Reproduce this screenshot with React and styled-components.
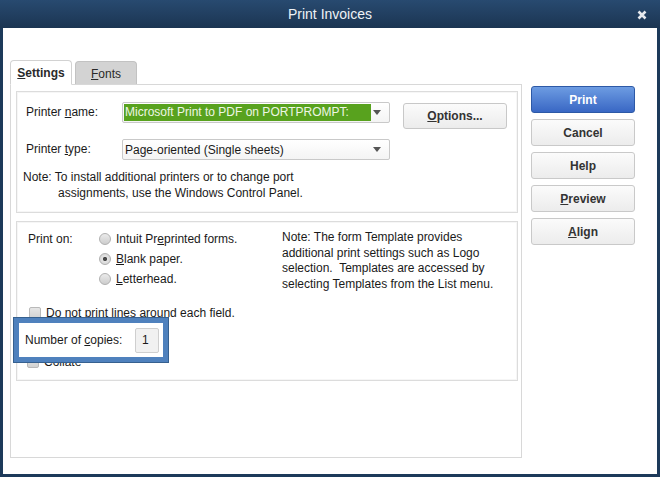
import styled, { createGlobalStyle } from "styled-components";

const GlobalStyle = createGlobalStyle`
    html, body {
        margin: 0;
        padding: 0;
        background: #ffffff;
    }
    * {
        box-sizing: border-box;
    }
`

export default function App() {
    return (
        <>
            <GlobalStyle />
            <Window>
                <TitleBar>
                    <Title>Print Invoices</Title>
                    <CloseIcon viewBox="0 0 10 10">
                        <path d="M1.5 1.5 L8.5 8.5 M8.5 1.5 L1.5 8.5" />
                    </CloseIcon>
                </TitleBar>

                <Body>
                    <LeftColumn>
                        <Tabs>
                            <Tab active><u>S</u>ettings</Tab>
                            <Tab><u>F</u>onts</Tab>
                        </Tabs>

                        <Panel>
                            <PrinterGroup>
                                <FieldRow>
                                    <Label>Printer <u>n</u>ame:</Label>
                                    <Select>
                                        <Selected>Microsoft Print to PDF on PORTPROMPT:</Selected>
                                        <Arrow />
                                    </Select>
                                    <OptionsButton><u>O</u>ptions...</OptionsButton>
                                </FieldRow>
                                <FieldRow spaced>
                                    <Label>Printer <u>t</u>ype:</Label>
                                    <Select>
                                        <SelectText>Page-oriented (Single sheets)</SelectText>
                                        <Arrow />
                                    </Select>
                                </FieldRow>
                                <PortNote>
                                    Note: To install additional printers or to change port
                                    <NoteIndent>assignments, use the Windows Control Panel.</NoteIndent>
                                </PortNote>
                            </PrinterGroup>

                            <PrintGroup>
                                <PrintOnRow>
                                    <PrintOnLabel>Print on:</PrintOnLabel>
                                    <RadioList>
                                        <RadioRow>
                                            <Radio />
                                            <span>Intuit Pr<u>e</u>printed forms.</span>
                                        </RadioRow>
                                        <RadioRow>
                                            <Radio checked />
                                            <span><u>B</u>lank paper.</span>
                                        </RadioRow>
                                        <RadioRow>
                                            <Radio />
                                            <span><u>L</u>etterhead.</span>
                                        </RadioRow>
                                    </RadioList>
                                    <TemplateNote>
                                        Note: The form Template provides additional print settings such as Logo selection.&nbsp; Templates are accessed by selecting Templates from the List menu.
                                    </TemplateNote>
                                </PrintOnRow>

                                <CheckRow>
                                    <Checkbox />
                                    <span>Do not print lines around each field.</span>
                                </CheckRow>

                                <Highlight>
                                    <span>Number of <u>c</u>opies:</span>
                                    <CopiesInput>1</CopiesInput>
                                </Highlight>

                                <CheckRow collate>
                                    <Checkbox />
                                    <span>Collate</span>
                                </CheckRow>
                            </PrintGroup>
                        </Panel>
                    </LeftColumn>

                    <ButtonColumn>
                        <DialogButton primary>Print</DialogButton>
                        <DialogButton>Cancel</DialogButton>
                        <DialogButton>Help</DialogButton>
                        <DialogButton><u>P</u>review</DialogButton>
                        <DialogButton><u>A</u>lign</DialogButton>
                    </ButtonColumn>
                </Body>
            </Window>
        </>
    )
}

const Window = styled.div`
    width: 660px;
    height: 477px;
    display: flex;
    flex-direction: column;
    background: #ffffff;
    border: 3px solid #1d3a5a;
    border-top: none;
    font-family: "Liberation Sans", Arial, sans-serif;
    font-size: 12px;
    color: #1a1a1a;
`

const TitleBar = styled.div`
    height: 28px;
    flex-shrink: 0;
    margin: 0 -3px;
    display: flex;
    align-items: center;
    justify-content: center;
    position: relative;
    background: linear-gradient(#284a70, #1b3552);
`

const Title = styled.div`
    color: #eef2f6;
    font-size: 14px;
`

const CloseIcon = styled.svg`
    position: absolute;
    right: 13px;
    top: 10px;
    width: 10px;
    height: 10px;
    stroke: #e6e9ee;
    stroke-width: 2.6;
    fill: none;
`

const Body = styled.div`
    flex: 1;
    display: flex;
    align-items: flex-start;
    padding: 32px 0 0 7px;
`

const LeftColumn = styled.div`
    width: 512px;
    display: flex;
    flex-direction: column;
`

const Tabs = styled.div`
    display: flex;
    align-items: flex-end;
    gap: 3px;
    height: 24px;
    position: relative;
    z-index: 1;
`

const Tab = styled.div`
    width: 62px;
    height: ${p => p.active ? "25px" : "23px"};
    margin-bottom: ${p => p.active ? "-1px" : "0"};
    display: flex;
    align-items: center;
    justify-content: center;
    padding-top: 1px;
    border: 1px solid ${p => p.active ? "#d2d2d2" : "#c2c2c2"};
    border-bottom: ${p => p.active ? "1px solid #ffffff" : "none"};
    border-radius: 4px 4px 0 0;
    background: ${p => p.active ? "#ffffff" : "#d3d3d3"};
    font-weight: ${p => p.active ? "bold" : "normal"};
    color: #2a2a2a;
`

const Panel = styled.div`
    height: 374px;
    border: 1px solid #d8d8d8;
    padding: 6px 3px 0 5px;
    display: flex;
    flex-direction: column;
    gap: 8px;
`

const Group = styled.div`
    border: 1px solid #dcdcdc;
    box-shadow: inset 0 0 0 1px #f6f6f6;
`

const PrinterGroup = styled(Group)`
    height: 122px;
    padding: 10px 0 0 9px;
`

const FieldRow = styled.div`
    display: flex;
    align-items: flex-start;
    margin-top: ${p => p.spaced ? "10px" : "0"};
`

const Label = styled.div`
    width: 96px;
    line-height: 21px;
`

const Select = styled.div`
    width: 268px;
    height: 21px;
    display: flex;
    align-items: center;
    padding: 0 8px 0 1px;
    border: 1px solid #c9c9c9;
    border-radius: 2px;
    background: linear-gradient(#ffffff, #f4f4f4);
`

const Selected = styled.div`
    width: 247px;
    height: 17px;
    line-height: 17px;
    padding-left: 1px;
    background: #58a21e;
    color: #eef6e4;
    white-space: nowrap;
`

const SelectText = styled.div`
    width: 247px;
    padding-left: 1px;
    white-space: nowrap;
`

const Arrow = styled.div`
    margin-left: auto;
    width: 0;
    height: 0;
    border-left: 4px solid transparent;
    border-right: 4px solid transparent;
    border-top: 5px solid #555555;
`

const buttonBase = `
    width: 104px;
    height: 27px;
    display: flex;
    align-items: center;
    justify-content: center;
    border-radius: 3px;
    font-weight: bold;
    font-size: 12px;
    font-family: "Liberation Sans", Arial, sans-serif;
`

const OptionsButton = styled.div`
    ${buttonBase}
    height: 26px;
    margin: 1px 0 0 13px;
    border: 1px solid #c8c8c8;
    background: linear-gradient(#fbfbfb, #ececec);
    color: #333333;
`

const PortNote = styled.div`
    margin: 9px 0 0 -3px;
    line-height: 16px;
`

const NoteIndent = styled.div`
    padding-left: 35px;
`

const PrintGroup = styled(Group)`
    height: 160px;
    padding: 7px 0 0 11px;
    display: flex;
    flex-direction: column;
`

const PrintOnRow = styled.div`
    display: flex;
    align-items: flex-start;
`

const PrintOnLabel = styled.div`
    width: 71px;
    line-height: 20px;
`

const RadioList = styled.div`
    width: 183px;
    display: flex;
    flex-direction: column;
`

const RadioRow = styled.div`
    height: 20px;
    display: flex;
    align-items: center;
    gap: 5px;
`

const Radio = styled.div`
    width: 12px;
    height: 12px;
    border-radius: 50%;
    border: 1px solid #b0b0b0;
    background: ${p => p.checked
        ? "radial-gradient(circle, #4a4a4a 0 1.8px, #e4e4e4 2.4px, #cfcfcf 100%)"
        : "linear-gradient(#ebebeb, #cdcdcd)"};
`

const TemplateNote = styled.div`
    width: 232px;
    margin-top: 1px;
    line-height: 15.5px;
`

const CheckRow = styled.div`
    height: 14px;
    display: flex;
    align-items: center;
    gap: 5px;
    margin: ${p => p.collate ? "0 0 0 -1px" : "14px 0 0 1px"};
`

const Checkbox = styled.div`
    width: 12px;
    height: 12px;
    border: 1px solid #b9b9b9;
    border-radius: 2px;
    background: linear-gradient(#e6e6e6, #d2d2d2);
`

const Highlight = styled.div`
    position: relative;
    z-index: 1;
    align-self: flex-start;
    width: 156px;
    height: 46px;
    margin: -3px 0 -8px -15px;
    padding: 0 4px 0 6px;
    display: flex;
    align-items: center;
    justify-content: space-between;
    background: #ffffff;
    border: 6px solid #4f81bd;
    outline: 1px solid #36608f;
    outline-offset: -1px;
`

const CopiesInput = styled.div`
    width: 24px;
    height: 25px;
    display: flex;
    align-items: center;
    padding-left: 6px;
    border: 1px solid #cfcfcf;
    border-radius: 2px;
    background: #f1f1f1;
`

const ButtonColumn = styled.div`
    width: 104px;
    margin: 26px 0 0 9px;
    display: flex;
    flex-direction: column;
    gap: 6px;
`

const DialogButton = styled.div`
    ${buttonBase}
    border: 1px solid ${p => p.primary ? "#2d59a6" : "#c9c9c9"};
    background: ${p => p.primary
        ? "linear-gradient(#6d9ce2, #3967c4)"
        : "linear-gradient(#fbfbfb, #ececec)"};
    color: ${p => p.primary ? "#ffffff" : "#333333"};
`
